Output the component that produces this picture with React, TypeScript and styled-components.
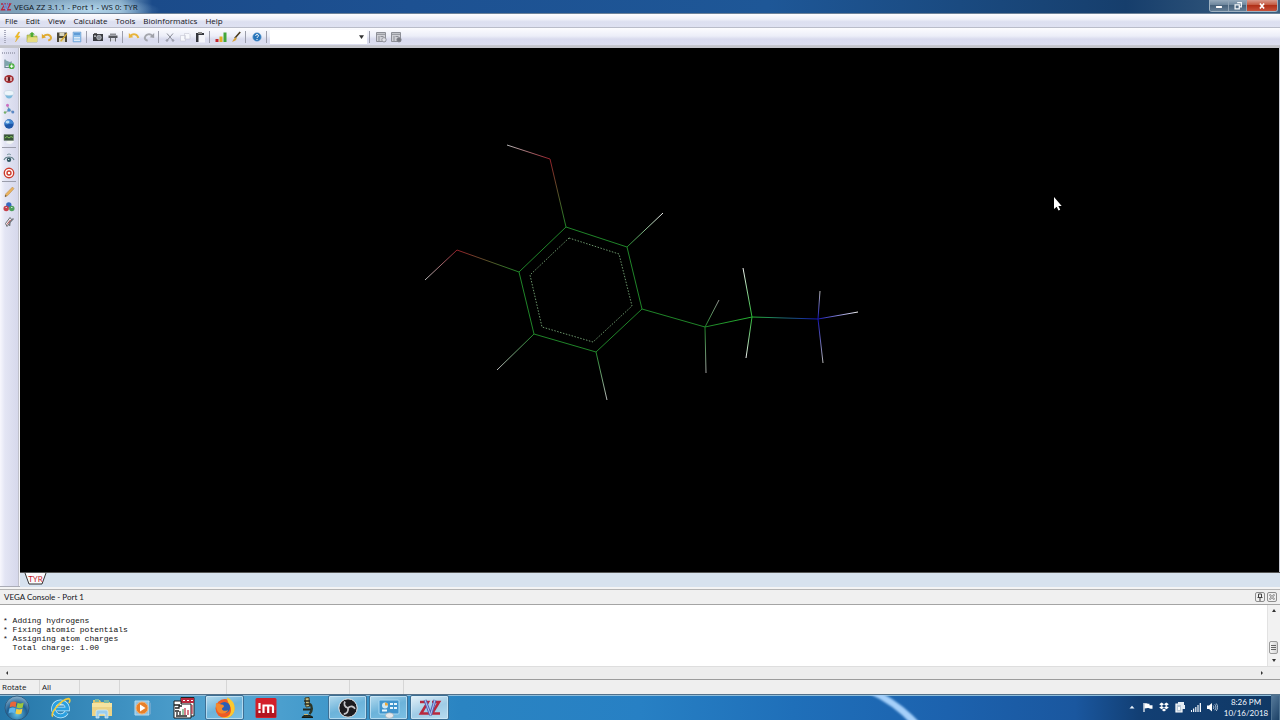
import React from "react";
import styled, { createGlobalStyle, css } from "styled-components";

const uiFont = `"Open Sans", "Noto Sans", sans-serif`;
const narrowFont = `Lato, "Open Sans", sans-serif`;

const GlobalStyle = createGlobalStyle`
  *, *::before, *::after { box-sizing: border-box; }
  html, body { margin: 0; padding: 0; }
  body { font-family: ${uiFont}; font-size: 8px; color: #14141a; background: #eee; }
  button, select { font: inherit; color: inherit; margin: 0; padding: 0; border: 0; background: none; }
  svg { display: block; }
`;

const Desktop = styled.div`
  min-height: 100vh;
  display: flex;
  flex-direction: column;
`;

/* ---------- title bar ---------- */

const TitleBar = styled.header`
  height: 14px;
  display: flex;
  align-items: center;
  border-bottom: 1px solid #6d8299;
  background:
    radial-gradient(ellipse 70px 12px at 90px 10px, rgba(190, 225, 245, 0.8), rgba(190, 225, 245, 0) 100%),
    linear-gradient(90deg, #7d9fb8 0, #84a9c6 120px, #1b4b8a 152px, #1d5192 32%, #1e5797 60%, #1a4a80 75%, #163e6c 88%, #3c5f80 100%);
`;

const AppIcon = styled.span`
  width: 13px;
  height: 12px;
`;

const Title = styled.h1`
  flex: 1;
  margin: 0;
  padding-left: 1px;
  font-size: 8px;
  line-height: 13px;
  font-weight: 400;
  color: #0c1218;
`;

const WindowButtons = styled.div`
  display: flex;
  align-self: flex-start;
  margin-right: 2px;
  border: 1px solid #9fb2c2;
  border-top: 0;
  border-radius: 0 0 3px 3px;
  overflow: hidden;
`;

const WindowButton = styled.button<{ $close?: boolean }>`
  width: ${(p) => (p.$close ? 31 : 18)}px;
  height: 11px;
  display: grid;
  place-items: center;
  border-left: 1px solid #8fa3b5;
  background: ${(p) =>
    p.$close
      ? "linear-gradient(#d99a8c 0, #c4583f 45%, #b03018 50%, #c8513a 100%)"
      : "linear-gradient(#96aabc 0, #6c859c 45%, #48637c 50%, #647e96 100%)"};
  &:first-child { border-left: 0; }
`;

/* ---------- menu and toolbar ---------- */

const MenuBar = styled.nav`
  height: 14px;
  display: flex;
  align-items: center;
  padding-left: 5px;
  gap: 8px;
  background: linear-gradient(#fdfdff 0, #eef0f9 40%, #dcdff0 60%, #dfe2f2 100%);
  border-bottom: 1px solid #b9bcc9;
`;

const MenuItem = styled.button`
  line-height: 12px;
`;

const ToolBar = styled.div`
  height: 20px;
  display: flex;
  align-items: center;
  padding: 0 0 3px 4px;
  background: linear-gradient(#fcfcff 0, #eceef8 40%, #d9dbee 55%, #dcdeef 84%, #c4c5cb 88%, #c4c5cb 100%);
`;

const Grip = styled.span<{ $horizontal?: boolean }>`
  ${(p) =>
    p.$horizontal
      ? css`width: 14px; height: 2px; margin: 4px 0 2px;
          background: repeating-linear-gradient(90deg, #a9abbd 0 1px, transparent 1px 2px);`
      : css`width: 2px; height: 13px; margin-right: 3px;
          background: repeating-linear-gradient(#a9abbd 0 1px, transparent 1px 2px);`}
`;

const ToolButton = styled.button`
  flex: none;
  width: 15px;
  height: 15px;
  display: grid;
  place-items: center;
`;

const Divider = styled.span`
  width: 1px;
  height: 12px;
  margin: 0 3px 0 2px;
  background: #9b9dab;
`;

const Combo = styled.span`
  width: 97px;
  height: 14px;
  display: grid;
  align-items: center;
  background: #fff;
  & > * { grid-area: 1 / 1; }
  & > svg { justify-self: end; margin-right: 3px; pointer-events: none; }
`;

const Select = styled.select`
  appearance: none;
  width: 100%;
  height: 14px;
  padding: 0 12px 0 3px;
  outline: 0;
`;

/* ---------- workspace ---------- */

const Workspace = styled.main`
  flex: 1;
  display: flex;
  min-height: 0;
`;

const SideBar = styled.div`
  width: 20px;
  display: flex;
  flex-direction: column;
  align-items: center;
  padding-right: 2px;
  background: linear-gradient(90deg, #f7f7fd 0, #e3e5f4 25%, #d6d8eb 90%, #a9abb8 91%, #f4f4f8 96%);
  border-bottom: 1px solid #aaacb6;
`;

const SideDivider = styled.span`
  width: 14px;
  height: 1px;
  margin: 1px 0 2px;
  background: #9b9dab;
`;

const ViewColumn = styled.div`
  flex: 1;
  display: flex;
  flex-direction: column;
  min-width: 0;
`;

const Viewport = styled.div`
  flex: 1;
  min-height: 300px;
  display: flex;
  background: #000;
  border-right: 1px solid #c8cad4;
  & > svg { flex: 1; min-width: 0; height: auto; }
`;

const TabStrip = styled.div`
  height: 15px;
  padding-left: 4px;
  background: #d7e2ee;
  border-top: 1px solid #555;
`;

const Tab = styled.button`
  position: relative;
  height: 12px;
  width: 23px;
  display: block;
  color: #c41a2c;
  font-family: ${narrowFont};
  line-height: 10px;
  svg { position: absolute; inset: 0; }
  span { position: relative; }
`;

/* ---------- console ---------- */

const Console = styled.section`
  display: flex;
  flex-direction: column;
  border-top: 2px solid #f4f4f4;
`;

const ConsoleHeader = styled.div`
  height: 16px;
  display: flex;
  align-items: center;
  gap: 2px;
  padding: 0 3px 0 4px;
  background: #f0f0f0;
  border-top: 1px solid #b5b5b5;
  border-bottom: 1px solid #a4a4a4;
`;

const ConsoleTitle = styled.h2`
  flex: 1;
  margin: 0;
  font-family: ${narrowFont};
  font-size: 8px;
  font-weight: 400;
  line-height: 12px;
`;

const HeaderButton = styled.button`
  width: 10px;
  height: 10px;
  display: grid;
  place-items: center;
  border: 1px solid #8e8e8e;
  border-radius: 2px;
`;

const ConsoleBody = styled.div`
  height: 61px;
  display: flex;
  background: #fff;
`;

const Log = styled.pre`
  flex: 1;
  margin: 0;
  padding: 11px 0 0 3px;
  font-family: "Liberation Mono", "Courier New", monospace;
  font-size: 8px;
  line-height: 9px;
  color: #111;
`;

const VScroll = styled.div`
  width: 13px;
  display: flex;
  flex-direction: column;
  align-items: center;
  justify-content: space-between;
  padding-right: 1px;
  background: #f2f2f2;
  border-left: 1px solid #e2e2e2;
`;

const ScrollTrack = styled.div`
  flex: 1;
  display: flex;
  flex-direction: column;
  justify-content: flex-end;
`;

const ScrollThumb = styled.span`
  width: 9px;
  height: 13px;
  display: grid;
  place-items: center;
  border: 1px solid #9a9a9a;
  border-radius: 2px;
  background: linear-gradient(90deg, #f6f6f6, #d6d6d6);
`;

const ScrollArrow = styled.button`
  width: 11px;
  height: 12px;
  display: grid;
  place-items: center;
`;

const HScroll = styled.div`
  height: 13px;
  display: flex;
  justify-content: space-between;
  align-items: flex-start;
  padding: 0 13px 0 1px;
  background: #ededed;
  border-top: 1px solid #dedede;
`;

const StatusBar = styled.footer`
  height: 15px;
  display: flex;
  background: #efefef;
  border-top: 1px solid #9c9c9c;
`;

const StatusCell = styled.span<{ $width: number }>`
  width: ${(p) => p.$width}px;
  padding-left: 2px;
  line-height: 13px;
  border-right: 1px solid #d6d6d6;
`;

/* ---------- taskbar ---------- */

const TaskBar = styled.div`
  position: relative;
  height: 27px;
  display: flex;
  align-items: stretch;
  border-top: 1px solid #54718a;
  box-shadow: inset 0 1px 0 #8fbedb;
  background: linear-gradient(90deg, #2576a8 0, #3f92c2 10%, #56a6d2 18%, #3a94c8 28%, #2a84c2 36%, #2780c4 50%, #1f6fb9 62%, #1c62ae 74%, #1a579f 84%, #123f74 89%, #103864 100%);
`;

const Streak = styled.svg`
  position: absolute;
  left: 0;
  top: 0;
  width: 100%;
  height: 100%;
  pointer-events: none;
`;

const StartButton = styled.button`
  width: 41px;
  padding-left: 4px;
`;

const TaskList = styled.div`
  flex: 1;
  display: flex;
  gap: 2px;
`;

const TaskButton = styled.button<{ $state?: "open" | "active" }>`
  width: 39px;
  height: 25px;
  display: grid;
  place-items: center;
  border-radius: 2px;
  ${(p) =>
    p.$state &&
    css`
      border: 1px solid #3d6f94;
      box-shadow: inset 0 0 0 1px rgba(220, 240, 252, 0.6);
      background: ${p.$state === "active"
        ? "linear-gradient(160deg, #e4f1f8, #9fcbe6 55%, #b8dcf0)"
        : "linear-gradient(160deg, #b4daee, #6cb3da 50%, #7cc0e4)"};
    `}
`;

const Tray = styled.div`
  display: flex;
  align-items: center;
  padding: 0 1px 2px 0;
`;

const TrayButton = styled.button`
  width: 16px;
  height: 16px;
  display: grid;
  place-items: center;
`;

const Clock = styled.time`
  width: 50px;
  display: flex;
  flex-direction: column;
  justify-content: center;
  text-align: center;
  font-family: ${narrowFont};
  line-height: 11px;
  color: #f2f8ff;
`;

const ShowDesktop = styled.button`
  width: 9px;
  border: 1px solid #4f7392;
  background: linear-gradient(120deg, #55799a, #1c4166);
`;

/* ---------- icons ---------- */

const Icon = ({ size = 12, children }: { size?: number; children: React.ReactNode }) => (
  <svg width={size} height={size} viewBox="0 0 12 12" fill="none" aria-hidden="true">
    {children}
  </svg>
);

const toolGroups: { label: string; art: React.ReactNode }[][] = [
  [
    { label: "New", art: <path d="M7.5 1 4 6.2h2L4.4 11 9 5H6.8L8.8 1z" fill="#f1bf22" stroke="#d79a1c" strokeWidth=".3" /> },
    {
      label: "Open",
      art: (
        <>
          <path d="M1 4h4l1 1h5v6H1z" fill="#c8cf62" stroke="#8d9438" strokeWidth=".5" />
          <path d="M1 11l1-4.5h9.5L11 11z" fill="#e6dc82" />
          <path d="M6 1l3 2.6H7.3V6H4.7V3.6H3z" fill="#4faa33" />
        </>
      ),
    },
    {
      label: "Reload",
      art: (
        <>
          <path d="M2.5 5.5C5 2.600 9.400 3.400 10 6.600c.2 1.600-1.400 2.600-2.800 2.600" stroke="#dfac35" strokeWidth="2" />
          <path d="M.8 2.800v4.600l4.200-.8z" fill="#e0a82c" />
        </>
      ),
    },
    {
      label: "Save",
      art: (
        <>
          <path d="M1 1.500h10V11H1z" fill="#4b4739" />
          <path d="M3.400 1.500h5v3.400h-5zM3 7h6v4H3z" fill="#d9d5bd" />
          <path d="M4 10 10.500 2l1 1L5.500 10.500z" fill="#d9ac34" />
        </>
      ),
    },
    {
      label: "Save image",
      art: (
        <>
          <path d="M2 1h8v10H2z" fill="#8dbfea" stroke="#6d98c8" strokeWidth=".5" />
          <path d="M3 2h6v2H3z" fill="#5f9bd6" />
          <path d="M3 6h6v1.500H3zM3 8.500h6v1.500H3z" fill="#dceaf7" />
        </>
      ),
    },
  ],
  [
    {
      label: "Capture",
      art: (
        <>
          <path d="M1 3h10v7H1z" fill="#3a3c42" />
          <path d="M2 2h3v1H2z" fill="#666" />
          <circle cx="7" cy="6.500" r="2.300" fill="#8a8f97" stroke="#d7dade" strokeWidth=".6" />
          <path d="M2 4.500h2v1.200H2z" fill="#d4d7dc" />
        </>
      ),
    },
    {
      label: "Print",
      art: (
        <>
          <path d="M3 2.500h6v1.500H3z" fill="#8e9096" />
          <path d="M1.500 4.500h9V7h-9z" fill="#55575d" />
          <path d="M3.500 7v3.500M8.500 7v3.500" stroke="#6a6c72" />
          <path d="M4 7.500h4v2.500H4z" fill="#d5d7de" />
        </>
      ),
    },
  ],
  [
    {
      label: "Undo",
      art: (
        <>
          <path d="M2.500 5C5 2 9.500 3 10.300 7" stroke="#e7b43c" strokeWidth="2" />
          <path d="M.8 2v5l4.500-.8z" fill="#e7b43c" />
        </>
      ),
    },
    {
      label: "Redo",
      art: (
        <>
          <path d="M9.500 5C7 2 2.500 3 1.700 7c.3 1.600 1.500 2.500 3 2.700" stroke="#a5a7ae" strokeWidth="1.800" />
          <path d="M11.200 2v5l-4.500-.8z" fill="#9ea0a8" />
        </>
      ),
    },
  ],
  [
    {
      label: "Cut",
      art: (
        <g stroke="#8b8e99" strokeWidth="1">
          <path d="M3 2.500 8.500 9M9 2.500 3.500 9" />
          <circle cx="3" cy="9.500" r=".8" />
          <circle cx="9" cy="9.500" r=".8" />
        </g>
      ),
    },
    {
      label: "Copy",
      art: (
        <g fill="#f7f8fc" stroke="#c6c8d4" strokeWidth=".6">
          <path d="M1.500 4.500h5V10h-5zM5.500 2.500h4.500l1 1V8H5.500z" />
        </g>
      ),
    },
    {
      label: "Paste",
      art: (
        <>
          <path d="M2 2h8v9H2z" fill="#34363d" />
          <path d="M4 1h4v2H4z" fill="#888" />
          <path d="M4.500 4H11v7.500H4.500z" fill="#f4f5fa" />
        </>
      ),
    },
  ],
  [
    {
      label: "Chart",
      art: (
        <>
          <path d="M.500 8h3v3h-3z" fill="#c5262c" />
          <path d="M4.500 5.500h3V11h-3z" fill="#e5ad22" />
          <path d="M8.500 1.500h3V11h-3z" fill="#42a63a" />
        </>
      ),
    },
    {
      label: "Brush",
      art: (
        <>
          <path d="M10.200 1 4.800 7.200" stroke="#47391f" strokeWidth="1.600" />
          <path d="M5.500 6.200 3.800 8 2 11l3.500-1.600 1.300-1.800z" fill="#d9a33a" />
        </>
      ),
    },
  ],
  [
    {
      label: "Help",
      art: (
        <>
          <circle cx="6" cy="6" r="4.300" fill="#2673b9" stroke="#8db7dd" strokeWidth=".6" />
          <path d="M4.600 4.800c.1-1.800 2.900-1.700 2.900 0C7.500 5.900 6 5.800 6 7M6 8v1" stroke="#fff" strokeWidth="1" />
        </>
      ),
    },
  ],
];

const GrayPanelIcon = ({ filled }: { filled?: boolean }) => (
  <Icon>
    <path d="M1.500 1.500h9v9h-9z" fill="#cfd0d6" stroke="#8d8f97" />
    <path d="M2 3.300h8M4 5v5M5.500 5.500h3" stroke="#8d8f97" />
    <circle cx="9" cy="8.800" r="2.200" fill={filled ? "#777981" : "#dfe0e6"} stroke="#85878f" strokeWidth=".8" />
  </Icon>
);

const sideGroups: { label: string; art: React.ReactNode }[][] = [
  [
    {
      label: "Add atoms",
      art: (
        <>
          <path d="M2 1.500v8.500M2 5.500 9 4M2 9.500h6" stroke="#6b8790" strokeWidth="1.200" />
          <path d="M2 2l6 2.500v3L2 8z" fill="#7fa5ad" />
          <circle cx="8.700" cy="8.200" r="2.900" fill="#4aae3f" />
          <path d="M8.700 6.500v3.400M7 8.200h3.400" stroke="#fff" />
        </>
      ),
    },
    {
      label: "Remove",
      art: (
        <>
          <ellipse cx="6" cy="6" rx="4.800" ry="4" fill="#a32c30" />
          <path d="M4 4v4M8 4v4" stroke="#f4eaea" strokeWidth="1.200" />
          <path d="M5.100 4.200h1.800v3.600H5.100z" fill="#4a2028" />
        </>
      ),
    },
    {
      label: "Surface",
      art: (
        <>
          <path d="M2 6h8c-.5 3-2 4.500-4 4.500S2.500 9 2 6z" fill="#7cb9dc" />
          <ellipse cx="6" cy="5" rx="5" ry="2.500" fill="#edf5fb" stroke="#b7ccd9" strokeWidth=".5" />
        </>
      ),
    },
    {
      label: "Bonds",
      art: (
        <>
          <path d="M4.500 2.500 6 7l4 2M6 7 2 10" stroke="#7d8a90" strokeWidth=".8" />
          <circle cx="4.500" cy="2.300" r="1.500" fill="#cc6fc2" />
          <circle cx="6" cy="7" r="1.700" fill="#4d8fc9" />
          <circle cx="2" cy="9.500" r="1.200" fill="#76b069" />
          <circle cx="9.800" cy="9" r="1.500" fill="#5c88c5" />
        </>
      ),
    },
    {
      label: "Sphere",
      art: (
        <>
          <circle cx="6" cy="6" r="4.700" fill="#1d57a8" />
          <path d="M1.500 6a4.500 4.500 0 0 1 9 0c-3-1-6 1.500-9 0z" fill="#3f86d2" />
          <ellipse cx="4.500" cy="4" rx="2" ry="1.400" fill="#b9dbf5" />
        </>
      ),
    },
    {
      label: "Monitor",
      art: (
        <>
          <path d="M5 7h6q0 3-4 4.300L3 10z" fill="#f3f6f4" />
          <path d="M1 1.500h9.500v6H1z" fill="#37543a" stroke="#77877a" strokeWidth=".6" />
          <path d="M2 5l2-1.500L6 5l2-1.500 2 1" stroke="#8bd05c" strokeWidth=".9" />
        </>
      ),
    },
  ],
  [
    {
      label: "View",
      art: (
        <>
          <path d="M4 3c1-1.300 3-1.300 4 0" stroke="#7d98a0" />
          <path d="M1 8C2.500 4 9.500 4 11 8" stroke="#66848c" strokeWidth="1.200" />
          <circle cx="6" cy="7.800" r="2.200" fill="#2f5660" />
          <path d="M5 7h1.200v1H5z" fill="#cfe0e5" />
        </>
      ),
    },
    {
      label: "Center",
      art: (
        <>
          <circle cx="6" cy="6" r="4.700" fill="#fff" stroke="#cd3a2b" strokeWidth="1.400" />
          <circle cx="6" cy="6" r="2" fill="#fff" stroke="#cd3a2b" strokeWidth="1.400" />
        </>
      ),
    },
  ],
  [
    {
      label: "Edit",
      art: (
        <>
          <path d="M9.500 1 11 2.700 4.700 9.600 2 10.800l.7-2.900z" fill="#e9b25c" stroke="#b98541" strokeWidth=".5" />
          <path d="M2 10.800l.5-1.800 1.200 1.100z" fill="#42382c" />
        </>
      ),
    },
    {
      label: "Colors",
      art: (
        <>
          <circle cx="5.800" cy="4" r="2.700" fill="#3668bd" />
          <circle cx="3.200" cy="7.500" r="2.700" fill="#c6404a" />
          <circle cx="8.800" cy="7.500" r="2.700" fill="#4c9f5b" />
          <path d="M2.500 6.500H4M8 6.500h1.500" stroke="#e9eef9" strokeWidth=".8" />
        </>
      ),
    },
    {
      label: "Tools",
      art: (
        <>
          <path d="M7 1.500 2.500 7.500 4 10.500 9 4z" fill="#e6e7ea" stroke="#62646a" strokeWidth=".9" />
          <path d="M10.500 2.500 7 6 6.500 10" stroke="#77797f" strokeWidth="1.500" />
          <path d="M4 8.500 7.500 4" stroke="#b04044" strokeWidth=".9" />
        </>
      ),
    },
  ],
];

const VegaLogo = ({ size }: { size: number }) => (
  <svg width={size} height={size} viewBox="0 0 24 24" fill="none" aria-hidden="true">
    <path d="M2 6h8L3 17.500h8M14 6h7l-7 11.500h8" stroke="#b8283e" strokeWidth="2.600" />
    <path d="M7 4l5.500 15L17 4" stroke="#5566b8" strokeWidth="3" strokeLinejoin="bevel" />
    <path d="M7 4l5.500 15L17 4" stroke="#b9c5ee" strokeWidth="1" strokeLinejoin="bevel" />
  </svg>
);

const TaskIcon = ({ children }: { children: React.ReactNode }) => (
  <svg width="24" height="24" viewBox="0 0 24 24" fill="none" aria-hidden="true">
    {children}
  </svg>
);

const tasks: { label: string; state?: "open" | "active"; art: React.ReactNode }[] = [
  {
    label: "Internet Explorer",
    art: (
      <TaskIcon>
        <path d="M17.500 16.500A7 7 0 1 1 18.500 13H7" stroke="#c4ecff" strokeWidth="4.600" />
        <path d="M17.500 16.500A7 7 0 1 1 18.500 13H7" stroke="#2a9fe0" strokeWidth="3.200" />
        <path d="M8 9.500q3.500-3 7 0z" fill="#d4f0fd" />
        <path d="M4 20.500C0 18 12 3.500 19.500 2.600c2 .4 1.500 2.600.5 4.400" stroke="#f0c93c" strokeWidth="1.600" />
      </TaskIcon>
    ),
  },
  {
    label: "File Explorer",
    art: (
      <TaskIcon>
        <path d="M3 4h7l1 2h9v14H3z" fill="#e2c66e" />
        <path d="M5 3h4v3H5zM14 4h5v3h-5z" fill="#7ab8a4" />
        <path d="M2 7h20v13H2z" fill="#f5e3a0" />
        <path d="M2 11h20v9H2z" fill="#ecd386" />
        <path d="M6 22v-6q0-2 2-2h8q2 0 2 2v6h-3v-4H9v4z" fill="#9acdee" stroke="#d9effb" strokeWidth=".7" />
      </TaskIcon>
    ),
  },
  {
    label: "Media Player",
    art: (
      <TaskIcon>
        <path d="M4 5h14v14H4z" fill="#8fc4e6" stroke="#b4daf0" />
        <path d="M18 6l2 1v11l-2 1z" fill="#6ba6cd" />
        <circle cx="11" cy="12" r="6" fill="#e8802a" stroke="#f7b371" />
        <path d="M9 8.500v7l5.500-3.500z" fill="#fff" />
      </TaskIcon>
    ),
  },
  {
    label: "Spectrum",
    art: (
      <TaskIcon>
        <path d="M9 1.500h13V20H9z" fill="#f7f7f7" stroke="#222" />
        <path d="M9 2h13v5H9z" fill="#b9283c" />
        <path d="M11 4.500h2m2 0h2m2 0h2" stroke="#fff" />
        <path d="M2 5h7v3h10v14H2z" fill="#fff" stroke="#1a1a1a" strokeWidth="1" />
        <path d="M2 9h6M3 12h4v-2h3M3 15h4M4 20h11M5 16v3m3-4v4" stroke="#222" strokeWidth="1.300" />
        <path d="M13 19v-7m3 7v-5M20 9v9" stroke="#b9283c" strokeWidth="1.200" />
        <path d="M11 19v-6" stroke="#2f8f4d" />
      </TaskIcon>
    ),
  },
  {
    label: "Firefox",
    state: "open",
    art: (
      <TaskIcon>
        <circle cx="12" cy="12.500" r="9.500" fill="#ee5b25" />
        <path d="M14 1.500c5 2 8 6 7.700 11.500A9.500 9.500 0 0 1 8 21c6 1.500 10-2 10-7 0-5-4-7-4-12.500z" fill="#fcc92f" />
        <circle cx="11.500" cy="11.500" r="5.600" fill="#2a5fb4" />
        <path d="M3 7c1 .5 3 0 5 1.500 1.500 0 3 .5 3 1.800 0 1.200-2 1.200-2 2.400 0 2 3 3 6 1.300-.5 4-8 5-10.500 1C3 12 2.500 9.500 3 7z" fill="#f5882b" />
      </TaskIcon>
    ),
  },
  {
    label: "Mestrelab",
    art: (
      <TaskIcon>
        <rect x="1.500" y="2" width="21" height="20" rx="1.500" fill="#d3202a" />
        <path d="M2 14h20v7H2z" fill="#b31620" />
        <path d="M5.500 7v6M5.500 14.500v2.500M9.500 17V8.500M9.500 9.500h8q1.500 0 1.500 1.500v6M14.200 9.500V17" stroke="#fff" strokeWidth="2.200" />
      </TaskIcon>
    ),
  },
  {
    label: "Microscope",
    art: (
      <TaskIcon>
        <path d="M10 2l4-.5.500 9-3.500.5z" fill="#c9bd7c" stroke="#3b3a26" />
        <path d="M9 5h6M9.500 8h6" stroke="#2b2b20" strokeWidth="1.300" />
        <path d="M15 8c2.500 2 2.500 7-.5 10" stroke="#2c3525" strokeWidth="2.400" />
        <path d="M8 13.500h8" stroke="#22261c" strokeWidth="2" />
        <path d="M7 21.500c1-3 9-3 11 0z" fill="#2a3124" stroke="#161a12" />
        <path d="M9 18.500h4" stroke="#c7b775" />
      </TaskIcon>
    ),
  },
  {
    label: "OBS Studio",
    state: "open",
    art: (
      <TaskIcon>
        <circle cx="12" cy="12" r="9.200" fill="#1d1c20" stroke="#e8e8ea" strokeWidth="1" />
        <g stroke="#c4c4c8" strokeWidth="1.800">
          <path d="M12 12C8.500 11 7.500 8 9 5.500" />
          <path d="M12 12c2.700-2.500 5.700-1.800 7 .8" />
          <path d="M12 12c.7 3.500-1.300 5.800-4.200 6" />
        </g>
      </TaskIcon>
    ),
  },
  {
    label: "Control Panel",
    state: "open",
    art: (
      <TaskIcon>
        <rect x="2" y="4" width="20" height="14" rx="1" fill="#3f93cc" stroke="#a9d8f2" />
        <circle cx="8" cy="9.500" r="3" fill="#cfe8f5" />
        <path d="M8 9.500v-3a3 3 0 0 1 3 3z" fill="#f0a93a" />
        <path d="M13 8h3m1 0h3M13 12h3m1 0h3M5 14.500h5" stroke="#e9f6fd" strokeWidth="2" />
        <ellipse cx="12.500" cy="19.500" rx="4" ry="2.700" fill="#e6e8ea" stroke="#9aa5ad" strokeWidth=".6" />
      </TaskIcon>
    ),
  },
  { label: "VEGA ZZ", state: "active", art: <VegaLogo size={24} /> },
];

const trayIcons: { label: string; art: React.ReactNode }[] = [
  { label: "Show hidden icons", art: <path d="M3.500 7.500h5L6 4.800z" fill="#e8f1fa" /> },
  {
    label: "Action Center",
    art: (
      <>
        <path d="M2 2v9" stroke="#fff" strokeWidth="1.200" />
        <path d="M2.500 2.500c2-.8 3 .6 5 .3v1.400h3v3.500c-2 .4-3-.6-4-.7-1.500-.2-2.500.3-4 .5z" fill="#fff" />
      </>
    ),
  },
  { label: "Dropbox", art: <path d="M3.700 1.500 1.200 3.200l2.500 1.700L6 3.200zM8.300 1.500 6 3.200l2.300 1.700 2.500-1.700zM1.200 6.500l2.500 1.700L6 6.500 3.700 5zM10.800 6.500 8.300 8.200 6 6.500 8.300 5zM3.800 9 6 10.500 8.200 9 6 7.400z" fill="#fff" /> },
  {
    label: "Power",
    art: (
      <>
        <path d="M2 3h6v8H2z" fill="#b9c9d8" stroke="#fff" strokeWidth="1.200" />
        <path d="M4 1h6v3H4zM7 4h4v4H7z" fill="#e4edf5" />
        <path d="M4 6h2v3H4z" fill="#fff" />
      </>
    ),
  },
  { label: "Network", art: <path d="M1 9h1v2H1zM3 7.500h1.200V11H3zM5.200 6h1.200v5H5.200zM7.400 4h1.200v7H7.400zM9.700 2h1.300v9H9.700z" fill="#f2f7fc" /> },
  {
    label: "Volume",
    art: (
      <>
        <path d="M1 4.500h2L6 2v8.500L3 8H1z" fill="#fff" />
        <path d="M7.200 4.500c.8 1 .8 2.500 0 3.500M8.800 3.300c1.500 1.800 1.500 4 0 5.900M10.300 2.500c2 2.500 1.600 5 0 7.500" stroke="#d4e2ef" strokeWidth=".8" />
      </>
    ),
  },
];

/* ---------- molecule ---------- */

type Atom = { x: number; y: number; color: string };
const carbon = "#1f8428";
const oxygen = "#94202a";
const nitrogen = "#1414b4";
const hydrogen = "#b8b8b8";

const atoms: Record<string, Atom> = {
  C1: { x: 566, y: 227, color: carbon },
  C2: { x: 627, y: 247, color: carbon },
  C3: { x: 642, y: 309, color: carbon },
  C4: { x: 596, y: 352, color: carbon },
  C5: { x: 534, y: 334, color: carbon },
  C6: { x: 519, y: 272, color: carbon },
  C7: { x: 705, y: 327, color: carbon },
  C8: { x: 752, y: 317, color: "#26b432" },
  O1: { x: 550, y: 159, color: oxygen },
  O2: { x: 457, y: 250, color: oxygen },
  N: { x: 818, y: 319, color: nitrogen },
  HO1: { x: 507, y: 145, color: hydrogen },
  HO2: { x: 425, y: 280, color: hydrogen },
  H2: { x: 663, y: 213, color: "#f0f0f0" },
  H4: { x: 607, y: 400, color: hydrogen },
  H5: { x: 497, y: 370, color: hydrogen },
  H7a: { x: 719, y: 300, color: "#969696" },
  H7b: { x: 706, y: 373, color: "#a0a0a0" },
  H8a: { x: 743, y: 268, color: "#f4f4f4" },
  H8b: { x: 746, y: 358, color: "#f0f0f0" },
  HN1: { x: 820, y: 291, color: hydrogen },
  HN2: { x: 858, y: 312, color: "#f4f4f4" },
  HN3: { x: 823, y: 363, color: hydrogen },
};

const bonds: [string, string][] = [
  ["C1", "C2"], ["C2", "C3"], ["C3", "C4"], ["C4", "C5"], ["C5", "C6"], ["C6", "C1"],
  ["C1", "O1"], ["O1", "HO1"], ["C6", "O2"], ["O2", "HO2"],
  ["C2", "H2"], ["C4", "H4"], ["C5", "H5"],
  ["C3", "C7"], ["C7", "H7a"], ["C7", "H7b"], ["C7", "C8"],
  ["C8", "H8a"], ["C8", "H8b"], ["C8", "N"],
  ["N", "HN1"], ["N", "HN2"], ["N", "HN3"],
];

const Molecule = () => (
  <svg viewBox="20 48 1259 524" role="img" aria-label="Dopamine wireframe model">
    {bonds.map(([from, to]) => {
      const a = atoms[from];
      const b = atoms[to];
      const id = `bond-${from}-${to}`;
      return (
        <g key={id}>
          <linearGradient id={id} gradientUnits="userSpaceOnUse" x1={a.x} y1={a.y} x2={b.x} y2={b.y}>
            <stop offset="0" stopColor={a.color} />
            <stop offset="1" stopColor={b.color} />
          </linearGradient>
          <line x1={a.x} y1={a.y} x2={b.x} y2={b.y} stroke={`url(#${id})`} strokeWidth="1" />
        </g>
      );
    })}
    <polygon points="569,238 619,254 632,306 593,342 542,327 530,275" fill="none" stroke="#6c966c" strokeWidth="1" strokeDasharray="1.500 1.500" />
    <path d="M1054 197v12l2.700-2.300 1.800 3.800 1.700-.8-1.800-3.700h3.300z" fill="#fff" />
  </svg>
);

/* ---------- page ---------- */

const menus = ["File", "Edit", "View", "Calculate", "Tools", "Bioinformatics", "Help"];

const log = [
  "* Adding hydrogens",
  "* Fixing atomic potentials",
  "* Assigning atom charges",
  "  Total charge: 1.00",
].join("\n");

const arrows = {
  up: "M0 3h4L2 0z",
  down: "M0 1h4L2 4z",
  left: "M3 0v4L1 2z",
  right: "M1 0v4l2-2z",
};

const Arrow = ({ to, size = 4 }: { to: keyof typeof arrows; size?: number }) => (
  <svg width={size} height={size} viewBox="0 0 4 4" aria-hidden="true">
    <path d={arrows[to]} fill="#333" />
  </svg>
);

export default function App() {
  return (
    <Desktop>
      <GlobalStyle />
      <TitleBar>
        <AppIcon>
          <VegaLogo size={12} />
        </AppIcon>
        <Title>VEGA ZZ 3.1.1 - Port 1 - WS 0: TYR</Title>
        <WindowButtons>
          <WindowButton aria-label="Minimize">
            <Icon size={10}><path d="M2.500 6h7v2.500h-7z" fill="#fff" /></Icon>
          </WindowButton>
          <WindowButton aria-label="Restore">
            <Icon size={10}><path d="M5 2h5v5H8M2.500 4.500h5v5h-5z" stroke="#f4f7fa" strokeWidth="1.500" /></Icon>
          </WindowButton>
          <WindowButton aria-label="Close" $close>
            <Icon size={10}><path d="M3.500 3l5 6M8.500 3l-5 6" stroke="#fff" strokeWidth="2" /></Icon>
          </WindowButton>
        </WindowButtons>
      </TitleBar>

      <MenuBar>
        {menus.map((name) => (
          <MenuItem key={name}>{name}</MenuItem>
        ))}
      </MenuBar>

      <ToolBar role="toolbar" aria-label="Main tools">
        <Grip />
        {toolGroups.map((group, i) => (
          <React.Fragment key={i}>
            {group.map((tool) => (
              <ToolButton key={tool.label} aria-label={tool.label}>
                <Icon>{tool.art}</Icon>
              </ToolButton>
            ))}
            <Divider />
          </React.Fragment>
        ))}
        <Combo>
          <Select aria-label="Selection" defaultValue="">
            <option value=""></option>
          </Select>
          <Arrow to="down" size={5} />
        </Combo>
        <Divider />
        <ToolButton aria-label="Add selection"><GrayPanelIcon /></ToolButton>
        <ToolButton aria-label="Remove selection"><GrayPanelIcon filled /></ToolButton>
      </ToolBar>

      <Workspace>
        <SideBar role="toolbar" aria-label="Molecule tools">
          <Grip $horizontal />
          {sideGroups.map((group, i) => (
            <React.Fragment key={i}>
              {i > 0 && <SideDivider />}
              {group.map((tool) => (
                <ToolButton key={tool.label} aria-label={tool.label}>
                  <Icon>{tool.art}</Icon>
                </ToolButton>
              ))}
            </React.Fragment>
          ))}
        </SideBar>
        <ViewColumn>
          <Viewport>
            <Molecule />
          </Viewport>
          <TabStrip>
            <Tab>
              <svg width="23" height="12" viewBox="0 0 23 12" aria-hidden="true">
                <path d="M1 0l4 11h13l4-11z" fill="#fbfbfd" />
                <path d="M1 0l4 11h13l4-11" fill="none" stroke="#333" />
              </svg>
              <span>TYR</span>
            </Tab>
          </TabStrip>
        </ViewColumn>
      </Workspace>

      <Console>
        <ConsoleHeader>
          <ConsoleTitle>VEGA Console - Port 1</ConsoleTitle>
          <HeaderButton aria-label="Pin">
            <svg width="8" height="8" viewBox="0 0 8 8" fill="none"><path d="M2.500 1h3v3.500M2.500 1v3.500M1.500 4.500h5M4 4.500V8" stroke="#444" /></svg>
          </HeaderButton>
          <HeaderButton aria-label="Close console">
            <svg width="8" height="8" viewBox="0 0 8 8" fill="none"><path d="M1.500 1.500l5 5M6.500 1.500l-5 5" stroke="#777" strokeWidth="1.600" /><path d="M1.500 1.500l5 5M6.500 1.500l-5 5" stroke="#eee" strokeWidth=".6" /></svg>
          </HeaderButton>
        </ConsoleHeader>
        <ConsoleBody>
          <Log>{log}</Log>
          <VScroll>
            <ScrollArrow aria-label="Scroll up"><Arrow to="up" /></ScrollArrow>
            <ScrollTrack>
              <ScrollThumb>
                <svg width="5" height="6" viewBox="0 0 5 6"><path d="M0 .5h5M0 2.500h5M0 4.500h5" stroke="#666" /></svg>
              </ScrollThumb>
            </ScrollTrack>
            <ScrollArrow aria-label="Scroll down"><Arrow to="down" /></ScrollArrow>
          </VScroll>
        </ConsoleBody>
        <HScroll>
          <ScrollArrow aria-label="Scroll left"><Arrow to="left" /></ScrollArrow>
          <ScrollArrow aria-label="Scroll right"><Arrow to="right" /></ScrollArrow>
        </HScroll>
      </Console>

      <StatusBar>
        <StatusCell $width={40}>Rotate</StatusCell>
        <StatusCell $width={40}>All</StatusCell>
        <StatusCell $width={40} />
        <StatusCell $width={107} />
        <StatusCell $width={123} />
        <StatusCell $width={54} />
      </StatusBar>

      <TaskBar>
        <Streak viewBox="0 0 1280 26" preserveAspectRatio="none" aria-hidden="true">
          <defs>
            <filter id="glow" x="-20%" y="-20%" width="140%" height="140%">
              <feGaussianBlur stdDeviation="1" />
            </filter>
          </defs>
          <path d="M868 -2h14q22 12 40 32h-10q-18-20-44-32z" fill="#a5d0fa" filter="url(#glow)" />
        </Streak>
        <StartButton aria-label="Start">
          <svg width="26" height="26" viewBox="0 0 26 26">
            <defs>
              <radialGradient id="orb" cx=".5" cy=".75" r=".7">
                <stop offset="0" stopColor="#5fc0e6" />
                <stop offset=".6" stopColor="#1f5f92" />
                <stop offset="1" stopColor="#7fa9c6" />
              </radialGradient>
            </defs>
            <circle cx="13" cy="13" r="12" fill="url(#orb)" stroke="#2a567a" strokeWidth=".8" />
            <path d="M6.500 7.500q3-1.800 6-.3l-.9 5q-3-1.400-6 .3z" fill="#e8663a" />
            <path d="M13.500 7.700q3 1.500 6.200-.3l-1 5q-3.100 1.600-6.100.2z" fill="#9cc63e" />
            <path d="M5.400 13.500q3-1.800 6-.3l-.9 5q-3-1.400-6 .3z" fill="#5eb5ec" />
            <path d="M12.400 13.700q3 1.500 6.100-.3l-1 5q-3.100 1.600-6 .2z" fill="#f6cd42" />
          </svg>
        </StartButton>
        <TaskList>
          {tasks.map((task) => (
            <TaskButton key={task.label} aria-label={task.label} $state={task.state}>
              {task.art}
            </TaskButton>
          ))}
        </TaskList>
        <Tray>
          {trayIcons.map((item) => (
            <TrayButton key={item.label} aria-label={item.label}>
              <Icon>{item.art}</Icon>
            </TrayButton>
          ))}
        </Tray>
        <Clock dateTime="2018-10-16T20:26">
          <span>8:26 PM</span>
          <span>10/16/2018</span>
        </Clock>
        <ShowDesktop aria-label="Show desktop" />
      </TaskBar>
    </Desktop>
  );
}
